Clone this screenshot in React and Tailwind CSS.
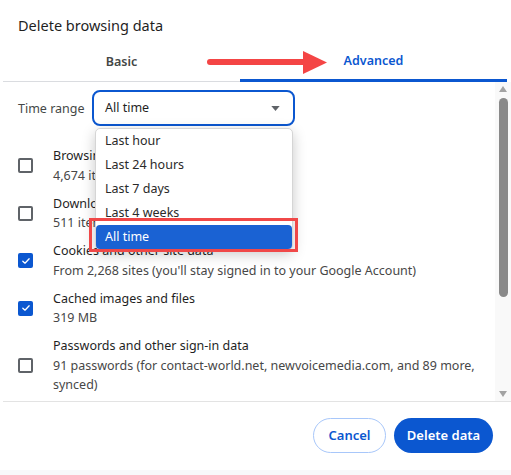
import { useState } from "react";

const items = [
  { title: "Browsing history", sub: ["4,674 items"], checked: false },
  { title: "Download history", sub: ["511 items"], checked: false },
  {
    title: "Cookies and other site data",
    sub: ["From 2,268 sites (you'll stay signed in to your Google Account)"],
    checked: true,
  },
  { title: "Cached images and files", sub: ["319 MB"], checked: true },
  {
    title: "Passwords and other sign-in data",
    sub: ["91 passwords (for contact-world.net, newvoicemedia.com, and 89 more,", "synced)"],
    checked: false,
  },
];

const ranges = ["Last hour", "Last 24 hours", "Last 7 days", "Last 4 weeks", "All time"];

function Checkbox({ checked }) {
  if (checked) {
    return (
      <div className="w-[15px] h-[15px] rounded-[2px] bg-[#0b57d0] flex items-center justify-center shrink-0">
        <svg viewBox="0 0 12 12" className="w-[10px] h-[10px]">
          <path d="M2.2 6.2 L4.8 8.6 L9.8 3.4" fill="none" stroke="white" strokeWidth="1.6" strokeLinecap="round" strokeLinejoin="round" />
        </svg>
      </div>
    );
  }
  return <div className="w-[15px] h-[15px] rounded-[2px] border-2 border-[#5f6368] shrink-0" />;
}

export default function App() {
  const [range] = useState("All time");

  return (
    <div className="relative w-[511px] h-[475px] bg-white overflow-hidden font-['Segoe_UI','Noto_Sans',sans-serif] text-[#1f1f1f]">
      {/* title */}
      <div className="h-[43px] pl-[18px] pt-[15px] text-[14.5px] leading-[20px]">Delete browsing data</div>

      {/* tabs */}
      <div className="ml-[3px] w-[504px] flex h-[39px] text-[12.5px] font-semibold">
        <div className="w-[237px] flex items-center justify-center text-[#444746] border-b border-[#dadce0]">Basic</div>
        <div className="flex-1 flex items-center justify-center text-[#0b57d0] border-b-[3px] border-[#0b57d0]">Advanced</div>
      </div>

      {/* red arrow annotation */}
      <svg className="absolute left-[200px] top-[46px] w-[132px] h-[32px]" viewBox="0 0 132 32">
        <line x1="10" y1="16" x2="106" y2="16" stroke="#f44545" strokeWidth="6" strokeLinecap="round" />
        <polygon points="103,5 127,16.5 103,28" fill="#f44545" />
      </svg>

      {/* body */}
      <div className="flex h-[319px]">
        <div className="flex-1 pl-[18px] pt-[8px]">
          <div className="flex items-center h-[36px] text-[12.5px]">
            <span className="w-[74px] text-[#444746] pt-[2px]">Time range</span>
            <div className="relative">
              <div className="w-[203px] h-[36px] border-2 border-[#0b57d0] rounded-[8px] flex items-center justify-between pl-[11px] pr-[13px] text-[#1f1f1f]">
                <span>{range}</span>
                <svg viewBox="0 0 10 6" className="w-[9px] h-[5px]">
                  <polygon points="0,0 10,0 5,6" fill="#5f6368" />
                </svg>
              </div>

              {/* open dropdown */}
              <div className="absolute left-[3px] top-[38px] w-[198px] z-10 bg-white border border-[#d5d5d5] rounded-[5px] shadow-[0_4px_14px_rgba(0,0,0,0.22)] text-[12.5px]">
                {ranges.map((r) =>
                  r === range ? (
                    <div key={r} className="h-[24px] flex items-center pl-[9px] bg-[#1a62d3] text-white rounded-[4px]">
                      {r}
                    </div>
                  ) : (
                    <div key={r} className="h-[24px] flex items-center pl-[9px] text-[#2a2a2a]">
                      {r}
                    </div>
                  )
                )}
              </div>
              {/* red highlight box */}
              <div className="absolute left-[-3px] top-[128px] w-[209px] h-[34px] z-20 border-[3px] border-[#f04848] pointer-events-none" />
            </div>
          </div>

          <div className="flex flex-col gap-[8.5px] mt-[20px]">
            {items.map((it) => (
              <div key={it.title} className="flex items-center">
                <div className="w-[35px]">
                  <Checkbox checked={it.checked} />
                </div>
                <div className="text-[12.5px] leading-[19.5px]">
                  <div className="text-[#1f1f1f]">{it.title}</div>
                  {it.sub.map((s) => (
                    <div key={s} className="text-[#474747]">{s}</div>
                  ))}
                </div>
              </div>
            ))}
          </div>
        </div>

        {/* scrollbar */}
        <div className="w-[16px] bg-[#f9f9f9] flex flex-col items-center pt-[4px] pb-[4px]">
          <svg viewBox="0 0 8 6" className="w-[8px] h-[6px]">
            <polygon points="0,6 8,6 4,0" fill="#a3a3a3" />
          </svg>
          <div className="w-[9px] h-[199px] mt-[6px] rounded-full bg-[#8a8a8a]" />
          <div className="flex-1" />
          <svg viewBox="0 0 8 6" className="w-[8px] h-[6px]">
            <polygon points="0,0 8,0 4,6" fill="#a3a3a3" />
          </svg>
        </div>
      </div>

      {/* footer */}
      <div className="ml-[3px] border-t border-[#e3e3e3] h-[69px] flex items-start justify-end gap-[8px] pt-[16px] pr-[18px]">
        <button className="h-[35px] w-[73px] rounded-full border border-[#a8c7fa] text-[#0b57d0] text-[13px] font-semibold">
          Cancel
        </button>
        <button className="h-[35px] w-[99px] rounded-full bg-[#0b57d0] text-white text-[13px] font-semibold">
          Delete data
        </button>
      </div>
      <div className="h-[5px] bg-[#f8f9fa]" />
    </div>
  );
}
